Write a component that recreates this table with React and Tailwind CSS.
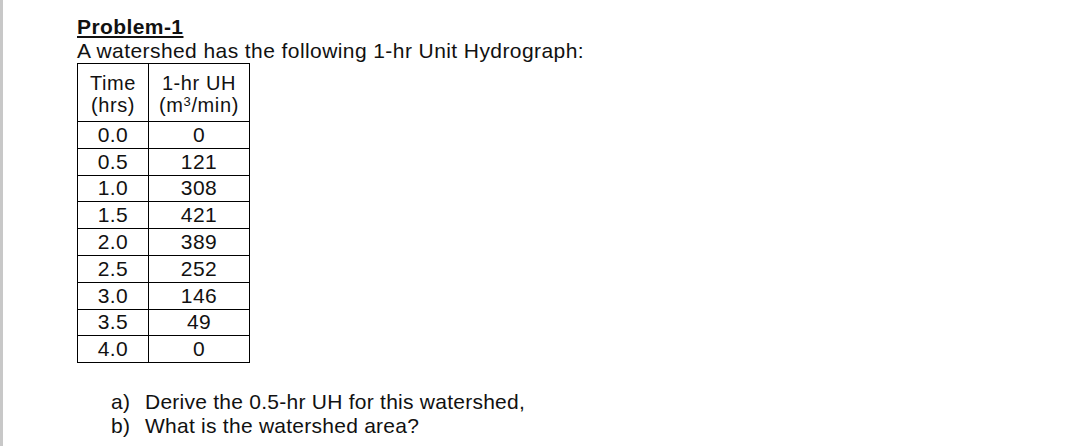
const rows = [
  ["0.0", "0"],
  ["0.5", "121"],
  ["1.0", "308"],
  ["1.5", "421"],
  ["2.0", "389"],
  ["2.5", "252"],
  ["3.0", "146"],
  ["3.5", "49"],
  ["4.0", "0"],
]

export default function App() {
  return (
    <div className="flex w-[1080px] h-[446px] bg-white text-[#111] font-['Liberation_Sans',Arial,sans-serif]">
      <div className="w-[3px] h-full bg-[#c8c8c8] shrink-0" />
      <div className="flex-1 pl-[74px] pt-[15px]">
        <p className="text-[21px] leading-[24px] font-bold underline underline-offset-[2px] tracking-[0.02em]">Problem-1</p>
        <p className="text-[21px] leading-[24px] tracking-[0.02em]">A watershed has the following 1-hr Unit Hydrograph:</p>

        <table className="border-collapse text-[20px] text-center tracking-[0.03em]">
          <thead>
            <tr>
              <th className="w-[71px] h-[58px] border border-black font-normal leading-[22px] pt-[3px]">Time<br />(hrs)</th>
              <th className="w-[101px] h-[58px] border border-black font-normal leading-[22px] pt-[3px]">
                1-hr UH<br />(m<sup className="text-[13px]">3</sup>/min)
              </th>
            </tr>
          </thead>
          <tbody className="text-[21px] tracking-[0.02em]">
            {rows.map(([t, q]) => (
              <tr key={t} className="h-[26.8px]">
                <td className="border border-black leading-[24px] p-0">{t}</td>
                <td className="border border-black leading-[24px] p-0">{q}</td>
              </tr>
            ))}
          </tbody>
        </table>

        <div className="mt-[27px] pl-[34px] text-[21px] leading-[24px] tracking-[0.012em]">
          <div className="flex">
            <span className="w-[34px]">a)</span>
            <span>Derive the 0.5-hr UH for this watershed,</span>
          </div>
          <div className="flex">
            <span className="w-[34px]">b)</span>
            <span>What is the watershed area?</span>
          </div>
        </div>
      </div>
    </div>
  )
}
